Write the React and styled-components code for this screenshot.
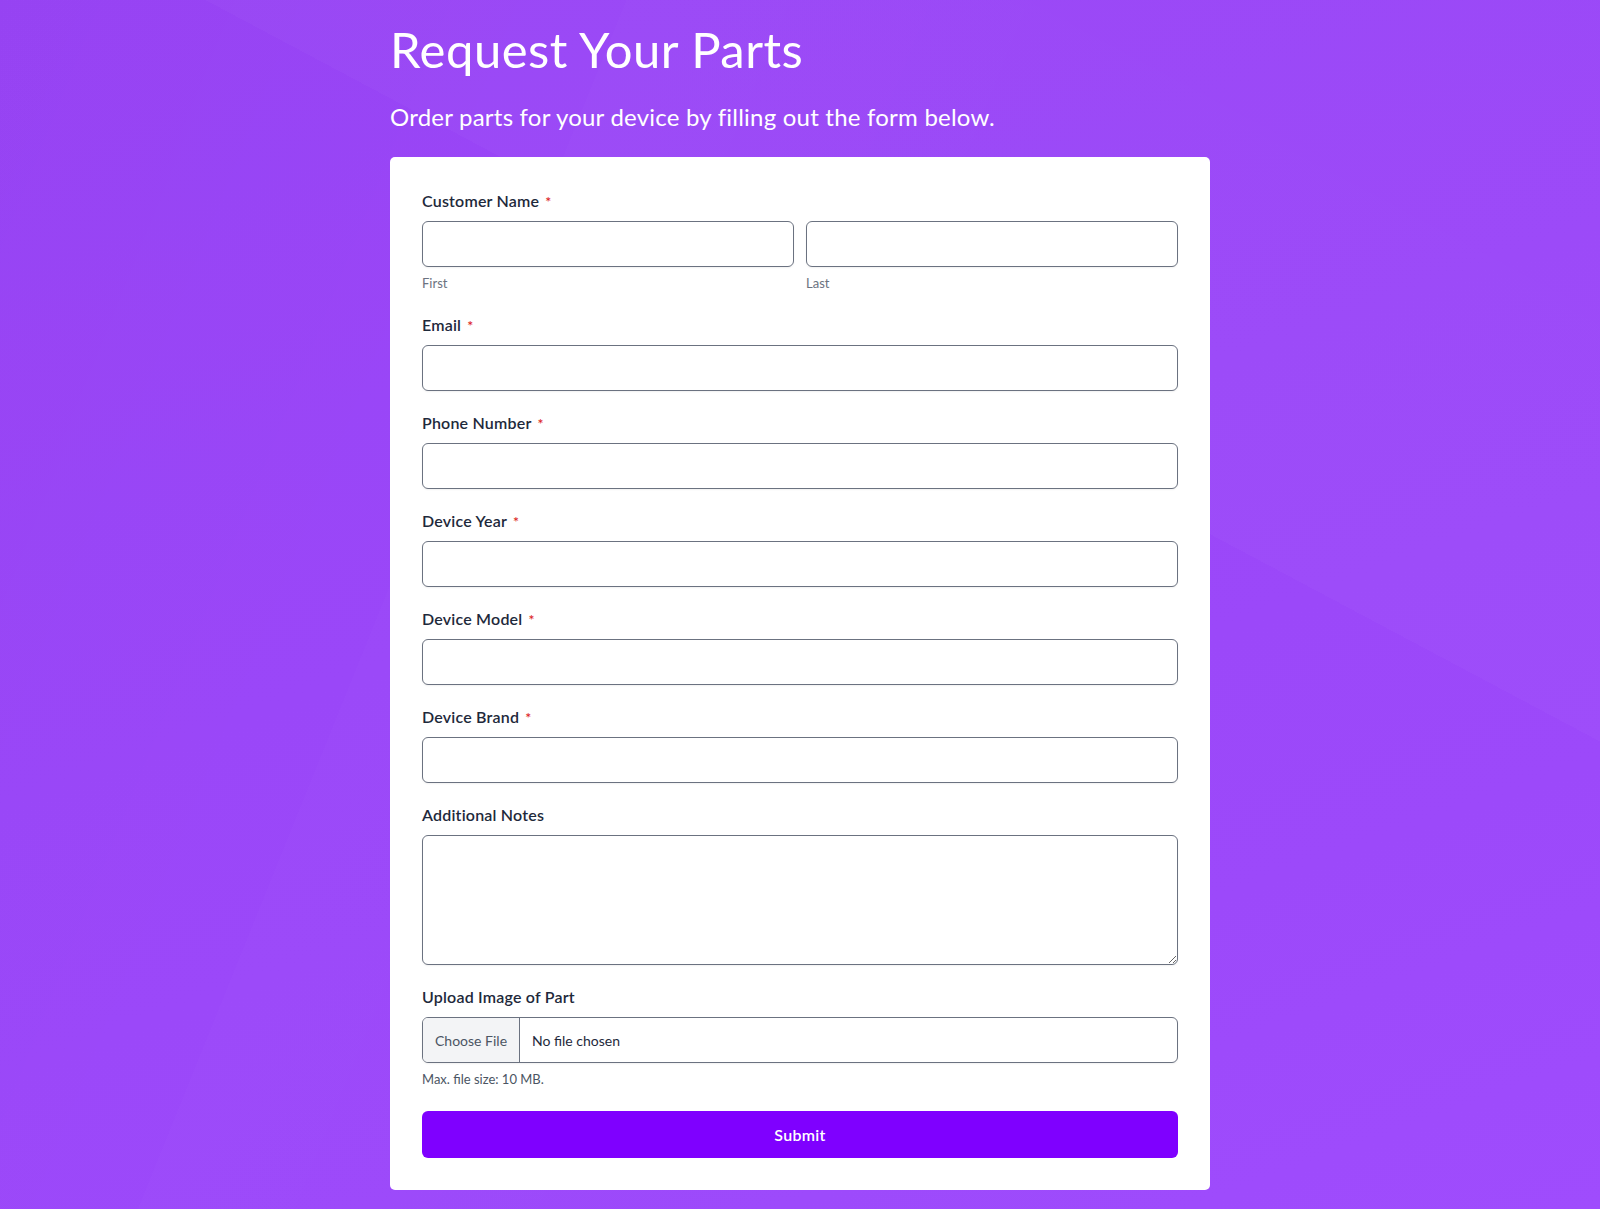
import React from "react";
import styled, { createGlobalStyle } from "styled-components";

const GlobalStyle = createGlobalStyle`
  html, body { margin: 0; padding: 0; }
  body {
    font-family: Lato, "Open Sans", "Liberation Sans", sans-serif;
    background: #9a46f7;
  }
  * { box-sizing: border-box; }
`;

const Page = styled.div`
  min-height: 100vh;
  padding: 20px 0 18px;
  background:
    linear-gradient(28deg, rgba(255,255,255,0) 0%, rgba(255,255,255,0) 64%, rgba(255,255,255,0.025) 64%, rgba(255,255,255,0.015) 100%),
    linear-gradient(112deg, rgba(0,0,0,0.01) 0%, rgba(0,0,0,0) 30%, rgba(255,255,255,0.012) 30%, rgba(255,255,255,0) 55%),
    linear-gradient(160deg, #9844f5 0%, #9a47f8 45%, #9c49fa 75%, #9f4cfd 100%);
`;

const Container = styled.main`
  width: 820px;
  margin: 0 auto;
`;

const Title = styled.h1`
  margin: 0;
  font-family: Lato, "Open Sans", sans-serif;
  font-weight: 400;
  font-size: 49px;
  line-height: 58px;
  letter-spacing: 0.5px;
  color: #ffffff;
`;

const Subtitle = styled.p`
  margin: 21px 0 22px;
  font-size: 24px;
  line-height: 36px;
  letter-spacing: 0.22px;
  font-weight: 400;
  color: #ffffff;
`;

const Card = styled.form`
  background: #ffffff;
  border-radius: 5px;
  padding: 32px;
  display: flex;
  flex-direction: column;
  gap: 20px;
`;

const Field = styled.div`
  display: flex;
  flex-direction: column;
`;

const Label = styled.label`
  display: block;
  font-size: 16px;
  line-height: 24px;
  font-weight: 600;
  letter-spacing: 0.2px;
  color: #1e293b;
  margin-bottom: 8px;
`;

const Required = styled.span`
  color: #dc2626;
  font-size: 14px;
  line-height: 0;
  margin-left: 6px;
`;

const NameGrid = styled.div`
  display: grid;
  grid-template-columns: 1fr 1fr;
  gap: 12px;
`;

const SubField = styled.div`
  display: flex;
  flex-direction: column;
`;

const inputBase = `
  width: 100%;
  border: 1px solid #6b7280;
  border-radius: 6px;
  background: #ffffff;
  box-shadow: 0 1px 2px rgba(0,0,0,0.06);
  font-family: Lato, "Open Sans", sans-serif;
  font-size: 16px;
  color: #1e293b;
  outline: none;
`;

const TextInput = styled.input`
  ${inputBase}
  height: 46px;
  padding: 0 12px;
`;

const TextArea = styled.textarea`
  ${inputBase}
  display: block;
  height: 130px;
  padding: 10px 12px;
  resize: vertical;
`;

const FileInput = styled.input`
  ${inputBase}
  height: 46px;
  padding: 0;
  font-size: 14px;
  overflow: hidden;

  &::file-selector-button {
    height: 100%;
    margin: 0 12px 0 0;
    padding: 0 12px;
    border: none;
    border-right: 1px solid #6b7280;
    background: #f3f4f6;
    color: #4b5563;
    font-family: Lato, "Open Sans", sans-serif;
    font-size: 14px;
  }
`;

const Hint = styled.span`
  display: block;
  margin-top: 7px;
  font-size: 13px;
  line-height: 19px;
  color: ${(p) => p.$color || "#6b7280"};
`;

const SubmitButton = styled.button`
  margin-top: 2px;
  height: 47px;
  width: 100%;
  border: none;
  border-radius: 6px;
  background: #7f00ff;
  color: #ffffff;
  font-family: Lato, "Open Sans", sans-serif;
  font-size: 16px;
  font-weight: 600;
  letter-spacing: 0.3px;
  cursor: pointer;
`;

const simpleFields = [
  { id: "email", label: "Email", type: "email" },
  { id: "phone", label: "Phone Number", type: "tel" },
  { id: "year", label: "Device Year", type: "text" },
  { id: "model", label: "Device Model", type: "text" },
  { id: "brand", label: "Device Brand", type: "text" },
];

export default function App() {
  return (
    <>
      <GlobalStyle />
      <Page>
        <Container>
          <Title>Request Your Parts</Title>
          <Subtitle>Order parts for your device by filling out the form below.</Subtitle>
          <Card onSubmit={(e) => e.preventDefault()}>
            <Field>
              <Label>
                Customer Name<Required>*</Required>
              </Label>
              <NameGrid>
                <SubField>
                  <TextInput type="text" aria-label="First" />
                  <Hint>First</Hint>
                </SubField>
                <SubField>
                  <TextInput type="text" aria-label="Last" />
                  <Hint>Last</Hint>
                </SubField>
              </NameGrid>
            </Field>
            {simpleFields.map((f) => (
              <Field key={f.id}>
                <Label htmlFor={f.id}>
                  {f.label}
                  <Required>*</Required>
                </Label>
                <TextInput id={f.id} type={f.type} />
              </Field>
            ))}
            <Field>
              <Label htmlFor="notes">Additional Notes</Label>
              <TextArea id="notes" />
            </Field>
            <Field>
              <Label htmlFor="upload">Upload Image of Part</Label>
              <FileInput id="upload" type="file" />
              <Hint $color="#4b5563">Max. file size: 10 MB.</Hint>
            </Field>
            <SubmitButton type="submit">Submit</SubmitButton>
          </Card>
        </Container>
      </Page>
    </>
  );
}
